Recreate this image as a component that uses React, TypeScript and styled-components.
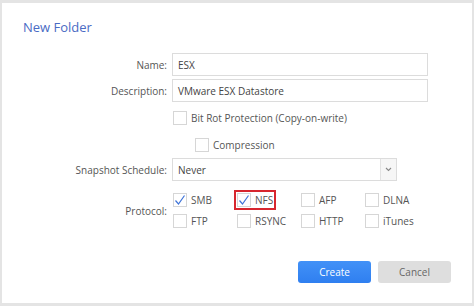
import type { FC } from "react";
import styled, { createGlobalStyle } from "styled-components";

const GlobalStyle = createGlobalStyle`
  html, body {
    margin: 0;
    padding: 0;
    background: #e4e4e4;
  }
  body {
    font-family: "Open Sans", "Noto Sans", sans-serif;
    font-size: 10px;
    color: #555;
  }
`;

const Frame = styled.div`
  width: 474px;
  height: 306px;
  box-sizing: border-box;
  padding: 3px 2px 3px 2px;
`;

const Panel = styled.div`
  background: #fff;
  height: 100%;
  box-sizing: border-box;
  padding: 15px 21px 0 21px;
  display: flex;
  flex-direction: column;
`;

const Title = styled.h1`
  margin: 0;
  font-size: 13px;
  line-height: 18px;
  font-weight: 400;
  color: #4a6bc4;
`;

const Form = styled.div`
  display: flex;
  flex-direction: column;
  margin-top: 17px;
  margin-left: -21px;
`;

const Row = styled.div<{ $mt?: number }>`
  display: grid;
  grid-template-columns: 170px 1fr;
  align-items: center;
  margin-top: ${({ $mt }) => $mt ?? 0}px;
`;

const Label = styled.div`
  text-align: right;
  padding-right: 5px;
  color: #555;
  white-space: nowrap;
`;

const TextInput = styled.div`
  width: 256px;
  height: 23px;
  box-sizing: border-box;
  border: 1px solid #dcdcdc;
  padding: 0 5px;
  display: flex;
  align-items: center;
  color: #444;
`;

const Select = styled.div`
  width: 225px;
  height: 23px;
  box-sizing: border-box;
  border: 1px solid #dcdcdc;
  display: flex;
  align-items: stretch;
  color: #444;
`;

const SelectValue = styled.div`
  flex: 1;
  display: flex;
  align-items: center;
  padding: 0 5px;
`;

const SelectArrow = styled.div`
  width: 15px;
  border-left: 1px solid #e2e2e2;
  background: #f6f6f6;
  display: flex;
  align-items: center;
  justify-content: center;
`;

const CheckItem = styled.label<{ $indent?: number; $highlight?: boolean }>`
  display: flex;
  align-items: center;
  gap: 4px;
  margin-left: ${({ $indent }) => $indent ?? 0}px;
  color: #555;
  height: 14px;
  white-space: nowrap;
  width: fit-content;
  outline: ${({ $highlight }) => ($highlight ? "2px solid #d7262e" : "none")};
  outline-offset: 1px;
`;

const Box = styled.span`
  width: 14px;
  height: 14px;
  box-sizing: border-box;
  border: 1px solid #d6d6d6;
  background: #fff;
  display: flex;
  align-items: center;
  justify-content: center;
  flex: none;
`;

const ProtocolGrid = styled.div`
  display: grid;
  grid-template-columns: repeat(4, 64px);
  row-gap: 7px;
  margin-left: 1px;
`;

const Footer = styled.div`
  display: flex;
  justify-content: flex-end;
  gap: 7px;
  margin-top: 33px;
`;

const Button = styled.button<{ $primary?: boolean }>`
  width: 73px;
  height: 22px;
  border: none;
  border-radius: 3px;
  font-family: inherit;
  font-size: 10px;
  padding: 0;
  color: ${({ $primary }) => ($primary ? "#fff" : "#666")};
  background: ${({ $primary }) =>
    $primary ? "linear-gradient(#4291f7, #2f7ff0)" : "#dedede"};
`;

const CheckMark: FC = () => (
  <svg width="12" height="12" viewBox="0 0 12 12">
    <path d="M1.5 6.5 L4.5 10 L10.5 1.5" fill="none" stroke="#3f74d8" strokeWidth="1.2" />
  </svg>
);

const Checkbox: FC<{
  label: string;
  checked?: boolean;
  indent?: number;
  highlight?: boolean;
}> = ({ label, checked, indent, highlight }) => (
  <CheckItem $indent={indent} $highlight={highlight}>
    <Box>{checked && <CheckMark />}</Box>
    {label}
  </CheckItem>
);

const protocols = [
  { label: "SMB", checked: true },
  { label: "NFS", checked: true, highlight: true },
  { label: "AFP" },
  { label: "DLNA" },
  { label: "FTP" },
  { label: "RSYNC" },
  { label: "HTTP" },
  { label: "iTunes" },
];

const App: FC = () => (
  <>
    <GlobalStyle />
    <Frame>
      <Panel>
        <Title>New Folder</Title>
        <Form>
          <Row>
            <Label>Name:</Label>
            <TextInput>ESX</TextInput>
          </Row>
          <Row $mt={3}>
            <Label>Description:</Label>
            <TextInput>VMware ESX Datastore</TextInput>
          </Row>
          <Row $mt={9}>
            <span />
            <Checkbox label="Bit Rot Protection (Copy-on-write)" indent={1} />
          </Row>
          <Row $mt={13}>
            <span />
            <Checkbox label="Compression" indent={23} />
          </Row>
          <Row $mt={6}>
            <Label>Snapshot Schedule:</Label>
            <Select>
              <SelectValue>Never</SelectValue>
              <SelectArrow>
                <svg width="7" height="5" viewBox="0 0 7 5">
                  <path d="M1 1 L3.5 3.5 L6 1" fill="none" stroke="#888" strokeWidth="1.1" />
                </svg>
              </SelectArrow>
            </Select>
          </Row>
          <Row $mt={12}>
            <Label>Protocol:</Label>
            <ProtocolGrid>
              {protocols.map((p) => (
                <Checkbox key={p.label} label={p.label} checked={p.checked} highlight={p.highlight} />
              ))}
            </ProtocolGrid>
          </Row>
        </Form>
        <Footer>
          <Button $primary>Create</Button>
          <Button>Cancel</Button>
        </Footer>
      </Panel>
    </Frame>
  </>
);

export default App;
